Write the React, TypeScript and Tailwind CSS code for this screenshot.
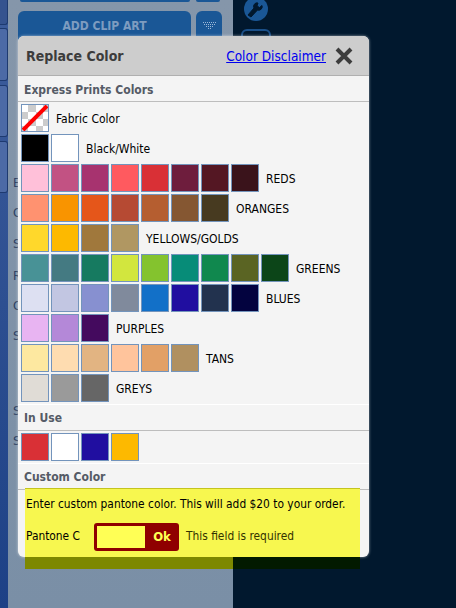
const font = { fontFamily: '"DejaVu Sans Condensed", "Noto Sans", sans-serif' };

type Row = { colors: string[]; label: string };

const rows: Row[] = [
  { colors: ["#ffc0d9", "#c25283", "#a7336f", "#ff5a5f", "#d93036", "#6e1d3d", "#541723", "#3a131b"], label: "REDS" },
  { colors: ["#ff9270", "#f99400", "#e5561a", "#b64a33", "#b55e30", "#855732", "#473a20"], label: "ORANGES" },
  { colors: ["#ffd82b", "#fdb900", "#a0783c", "#b09762"], label: "YELLOWS/GOLDS" },
  { colors: ["#489296", "#447a82", "#167a60", "#d2e63e", "#84c32e", "#078c78", "#10884e", "#5a6423", "#0c4518"], label: "GREENS" },
  { colors: ["#dde0f2", "#c2c6e2", "#8790d0", "#808a9c", "#1270c8", "#200ea0", "#22324e", "#03033f"], label: "BLUES" },
  { colors: ["#e8b4f2", "#b488d8", "#440a5e"], label: "PURPLES" },
  { colors: ["#fde8a0", "#fedcb0", "#e2b482", "#ffc49c", "#e2a066", "#b09060"], label: "TANS" },
  { colors: ["#e0dcd6", "#9a9a9a", "#666666"], label: "GREYS" },
];

// first letters of the panel labels that stick out left of the dialog
const peeks: { letter: string; height: string }[] = [
  { letter: "E", height: "h-[30px]" },
  { letter: "C", height: "h-[31px]" },
  { letter: "S", height: "h-[32px]" },
  { letter: "R", height: "h-[30px]" },
  { letter: "O", height: "h-[30px]" },
  { letter: "S", height: "h-[75px]" },
  { letter: "S", height: "h-[30px]" },
  { letter: "S", height: "h-[30px]" },
];

function Swatch({ color }: { color: string }) {
  return (
    <div
      className="w-7 h-7 shrink-0 border border-[#7394bc]"
      style={{ backgroundColor: color }}
    />
  );
}

function SectionHead({ children, high }: { children: string; high?: boolean }) {
  return (
    <div className={`h-[26px] pl-[6px] flex items-center border-b border-[#bdbdbd] text-[12px] font-bold text-[#555b66] ${high ? "" : "pt-[2px]"}`}>
      {children}
    </div>
  );
}

export default function App() {
  return (
    <div className="relative w-[456px] h-[608px] overflow-hidden bg-[#01182e] text-[12px] text-black" style={font}>
      {/* page behind the dialog */}
      <div className="flex h-full">
        <div className="w-2 shrink-0 flex flex-col bg-gradient-to-b from-[#3d5d9c] to-[#1d4186]">
          <div className="h-[25px] bg-[#35538f] border-r border-b border-[#1e3a70] rounded-br-[3px]" />
          <div className="mt-[3px] h-[53px] bg-[#4c6aa6] border-r border-y border-[#1e3a70] rounded-r-[3px]" />
          <div className="mt-[4px] h-[52px] bg-[#4c6aa6] border-r border-y border-[#1e3a70] rounded-r-[3px]" />
          <div className="mt-[4px] h-[52px] bg-[#4c6aa6] border-r border-y border-[#1e3a70] rounded-r-[3px]" />
        </div>
        <div className="w-[225px] shrink-0 bg-gradient-to-b from-[#8596aa] to-[#7a8fa6]">
          <div className="ml-[12px] flex gap-[5px]">
            <div className="w-[170px] h-[2px] rounded-b-[3px] bg-[#1a5796]" />
            <div className="ml-[1px] w-[24px] h-[2px] rounded-b-[3px] bg-[#1a5796]" />
          </div>
          <div className="mt-[9px] ml-[10px] flex gap-[5px]">
            <div className="w-[173px] h-[30px] rounded-t-[6px] bg-[#1a5796] text-center pt-[6px] text-[12px] font-bold text-[#7e9cc0]">
              ADD CLIP ART
            </div>
            <div className="w-[26px] h-[30px] rounded-t-[6px] bg-[#1a5796] flex justify-center pt-[11px]">
              <svg width="14" height="8" viewBox="0 0 14 8" fill="#9db8d8">
                <path d="M1 0h1v1H1zM3 0h1v1H3zM5 0h1v1H5zM7 0h1v1H7zM9 0h1v1H9zM11 0h1v1h-1zM13 0h1v1h-1zM2 2h1v1H2zM4 2h1v1H4zM6 2h1v1H6zM8 2h1v1H8zM10 2h1v1h-1zM12 2h1v1h-1zM4 4h1v1H4zM6 4h1v1H6zM8 4h1v1H8zM10 4h1v1h-1zM6 6h1v1H6zM8 6h1v1H8z" />
              </svg>
            </div>
          </div>
          <div className="mt-[132px] flex flex-col text-[13px] text-[#2a3f62]">
            {peeks.map((p, i) => (
              <div key={i} className={`${p.height} pl-[5px]`}>
                {p.letter}
              </div>
            ))}
          </div>
        </div>
      </div>

      {/* wrench and next tool behind the dialog */}
      <svg className="absolute left-[244px] top-0" width="24" height="22" viewBox="0 0 24 22">
        <circle cx="12" cy="9" r="12" fill="#1a5796" />
        <path d="M7 17l6.500-7a3.500 3.500 0 0 0 4.500-4.500l-2.500 2-2.500-1.500 1-3a3.500 3.500 0 0 0-4 5l-6 7z" fill="#01182e" stroke="#01182e" />
      </svg>
      <div className="absolute left-[241px] top-[29px] w-[30px] h-[12px] rounded-t-[6px] border-2 border-[#1a4f88]" />

      {/* dialog */}
      <div className="absolute left-[18px] top-[36px] w-[351px] h-[521px] rounded-[6px] bg-[#f4f4f4] shadow-[0_0_3px_rgba(255,255,255,0.6)]">
        <div className="h-[40px] rounded-t-[6px] bg-[#cdcdcd] border-b border-[#b0b0b0] flex items-center pl-[8px] pr-[16px]">
          <span className="pt-[2px] text-[14px] font-bold text-[#3c3c3c]">Replace Color</span>
          <a className="ml-auto pt-[2px] text-[13.5px] text-[#0000ee] underline" href="#">Color Disclaimer</a>
          <svg className="ml-[9px]" width="18" height="18" viewBox="0 0 18 18">
            <path d="M2 2l14 14M16 2L2 16" stroke="#3c3c3c" strokeWidth="4" />
          </svg>
        </div>
        <SectionHead>Express Prints Colors</SectionHead>
        <div className="pl-[3px] pt-[2px] flex flex-col gap-[2px]">
          <div className="flex items-center h-7">
            <div className="w-7 h-7 border border-[#7394bc] bg-white overflow-hidden">
              <svg width="26" height="26" viewBox="0 0 26 26">
                <path d="M6 0h8v7H6zM21 0h5v7h-5zM0 7h6v7H0zM14 7h7v7h-7zM6 14h8v7H6zM21 14h5v7h-5zM0 21h6v5H0zM14 21h7v5h-7z" fill="#cccccc" />
                <path d="M1 25L25 1" stroke="#ff0000" strokeWidth="4" />
              </svg>
            </div>
            <span className="ml-[7px] pt-[2px]">Fabric Color</span>
          </div>
          <div className="flex items-center gap-[2px] h-7">
            <Swatch color="#000000" />
            <Swatch color="#ffffff" />
            <span className="ml-[5px] pt-[2px]">Black/White</span>
          </div>
          {rows.map((row) => (
            <div key={row.label} className="flex items-center gap-[2px] h-7">
              {row.colors.map((c) => (
                <Swatch key={c} color={c} />
              ))}
              <span className="ml-[5px] pt-[2px]">{row.label}</span>
            </div>
          ))}
        </div>
        <div className="mt-[2px] border-t border-white">
          <SectionHead high>In Use</SectionHead>
        </div>
        <div className="pl-[3px] pt-[2px] pb-[2px] flex gap-[2px]">
          <Swatch color="#d93036" />
          <Swatch color="#ffffff" />
          <Swatch color="#200ea0" />
          <Swatch color="#fdb900" />
        </div>
        <div className="border-t border-white">
          <SectionHead high>Custom Color</SectionHead>
        </div>
      </div>

      {/* required message, sits over the dialog with its own hard shadow */}
      <div className="absolute left-[25px] top-[488px] w-[335px] h-[69px] bg-[#f7f74f] border-t border-[#c4c41e] flex flex-col text-[11.85px]">
        <div className="pl-[1px] pt-[7px] leading-[16px] whitespace-nowrap">Enter custom pantone color. This will add $20 to your order.</div>
        <div className="mt-[11px] pl-[1px] flex items-center">
          <span className="w-[68px]">Pantone C</span>
          <div className="w-[85px] h-[28px] rounded-[3px] bg-[#8f0000] flex items-center p-[3px]">
            <div className="w-[48px] h-full bg-[#ffff55]" />
            <span className="flex-1 pl-[3px] text-center text-[13px] font-bold text-[#ffff55]">Ok</span>
          </div>
          <span className="ml-[7px] text-[#333300]">This field is required</span>
        </div>
      </div>
      <div className="absolute left-[25px] top-[557px] w-[208px] h-[12px] bg-[#7d8800]" />
      <div className="absolute left-[233px] top-[557px] w-[127px] h-[12px] bg-[#021a00]" />
    </div>
  );
}
